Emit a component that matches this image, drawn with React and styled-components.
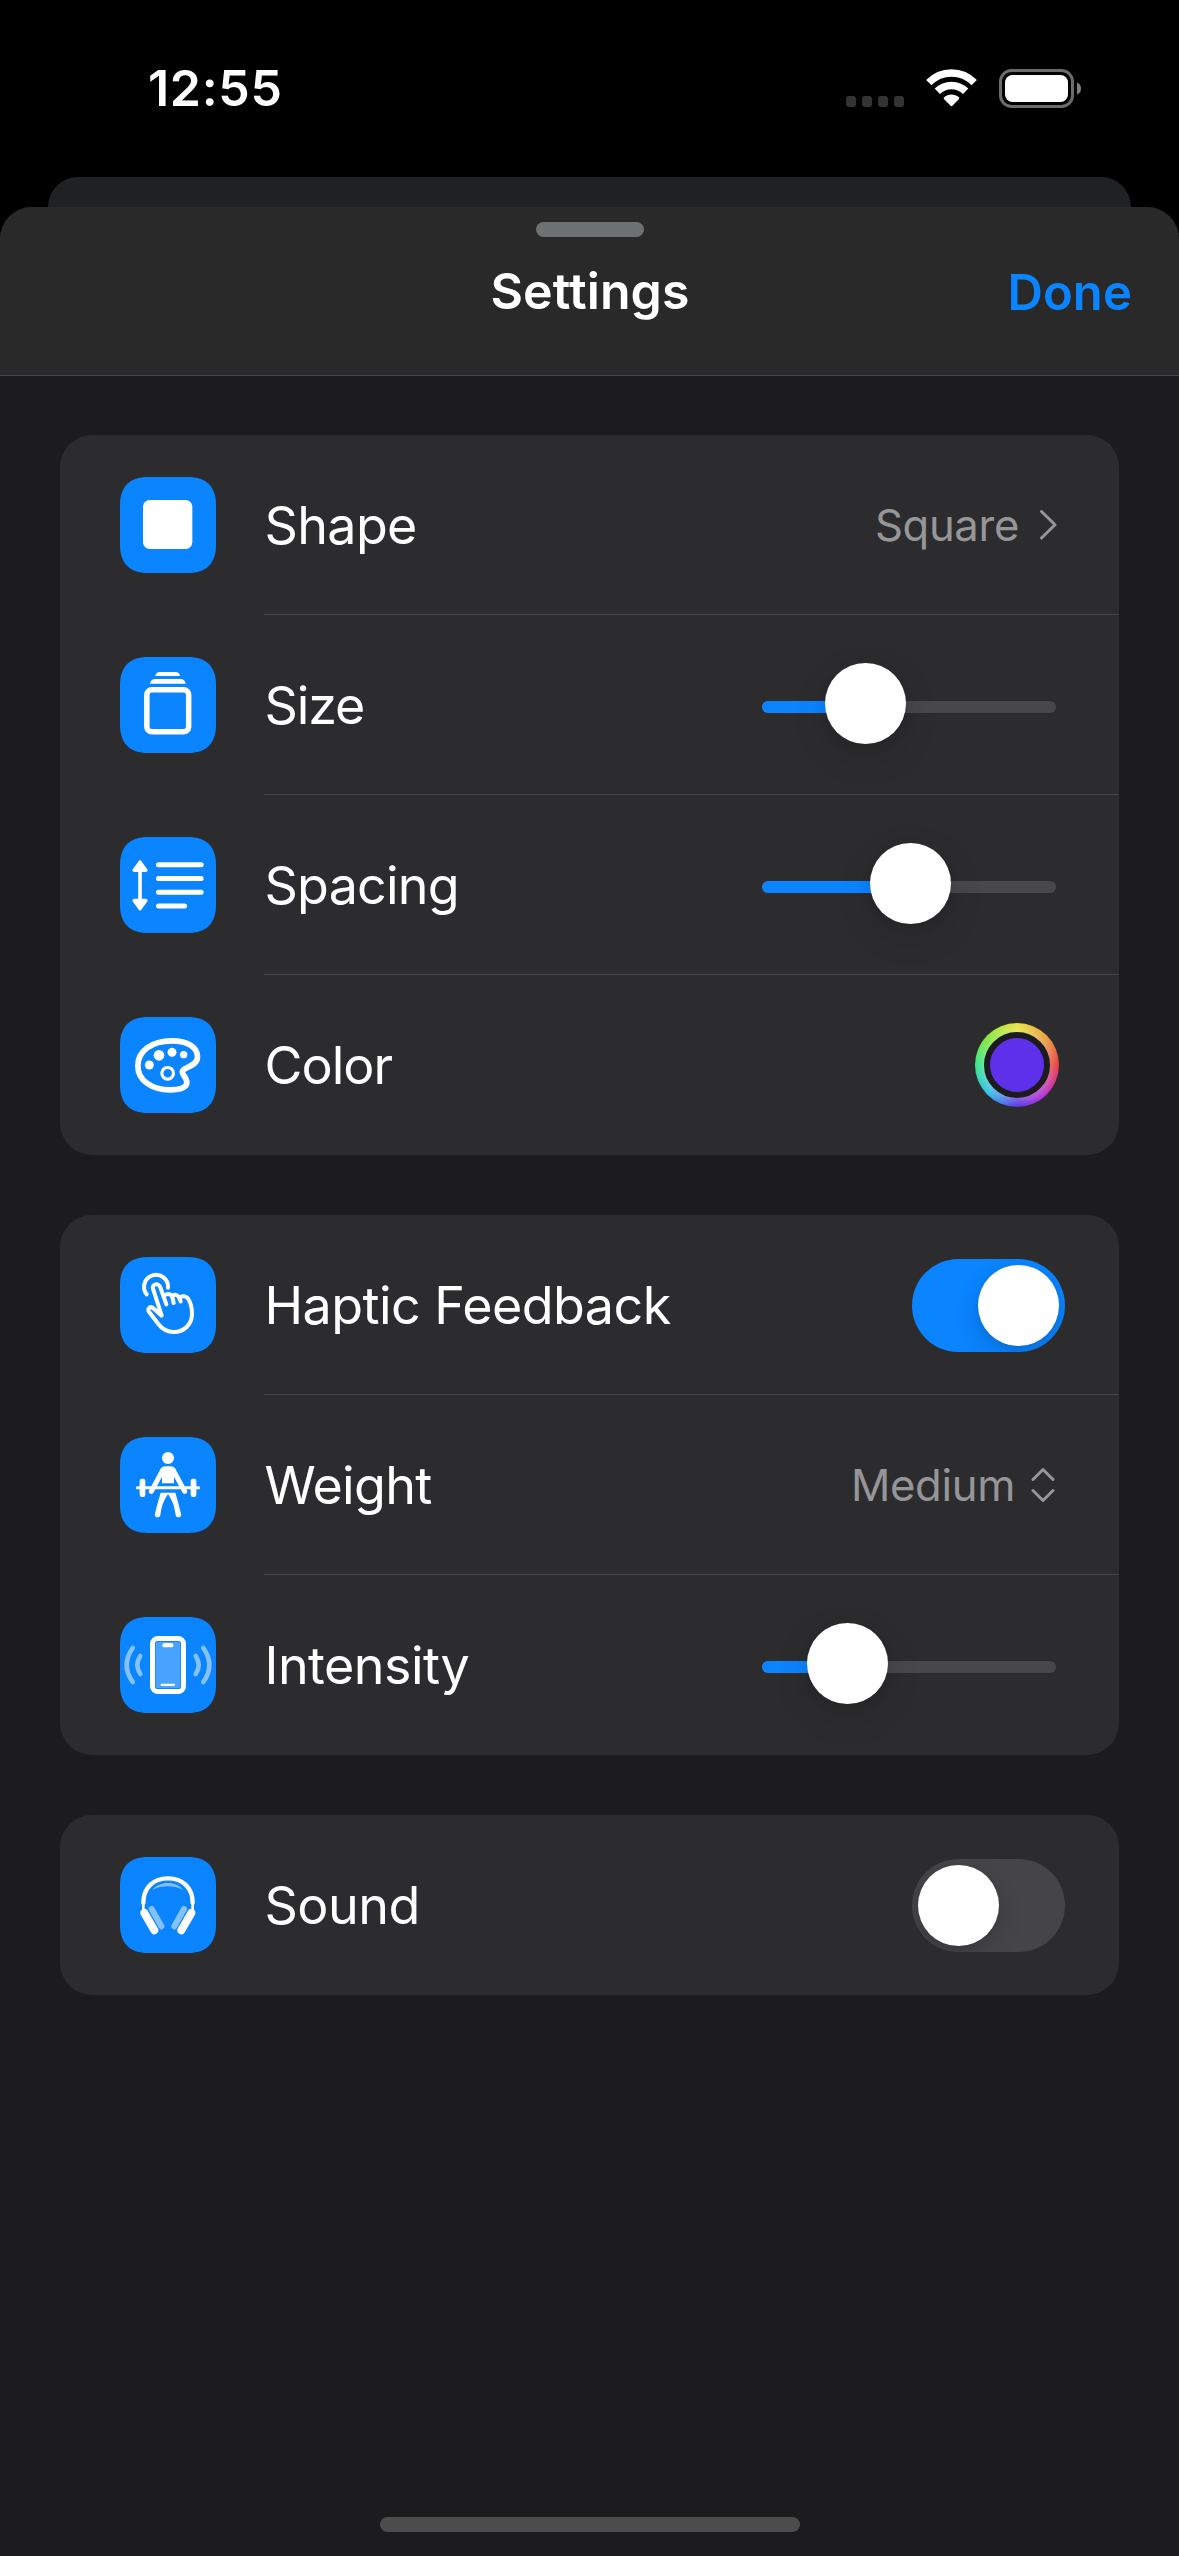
import React from 'react';
import styled, { createGlobalStyle } from 'styled-components';

const FONT = 'Inter, Roboto, "Liberation Sans", sans-serif';
const BLUE = '#0a84ff';

const GlobalStyle = createGlobalStyle`
  *, *::before, *::after { box-sizing: border-box; }
  html, body { margin: 0; padding: 0; background: #000; }
  body { font-family: ${FONT}; color: #fff; }
`;

const Screen = styled.div`
  width: 1179px;
  height: 2556px;
  display: flex;
  flex-direction: column;
  background: #000;
  overflow: hidden;
`;

const StatusBar = styled.div`
  height: 177px;
  padding: 0 98px 1px 148px;
  display: flex;
  align-items: center;
  justify-content: space-between;
`;

const Clock = styled.span`
  font-size: 50px;
  font-weight: 600;
  letter-spacing: 0.68px;
`;

const StatusIcons = styled.div`
  display: flex;
  align-items: center;
  gap: 22px;
`;

const BackSheet = styled.div`
  height: 30px;
  margin: 0 48px;
  border-radius: 30px 30px 0 0;
  background: #202122;
`;

const Sheet = styled.main`
  flex: 1;
  display: flex;
  flex-direction: column;
  align-items: stretch;
  border-radius: 32px 32px 0 0;
  background: #1c1c1e;
  overflow: hidden;
`;

const SheetHeader = styled.header`
  height: 169px;
  padding-top: 15px;
  display: flex;
  flex-direction: column;
  align-items: center;
  background: #292929;
  border-bottom: 1px solid #464647;
`;

const Grabber = styled.div`
  width: 108px;
  height: 15px;
  border-radius: 7.5px;
  background: #6e7172;
`;

const NavRow = styled.div`
  width: 100%;
  height: 108px;
  padding: 0 47px 0 48px;
  display: grid;
  grid-template-columns: 1fr auto 1fr;
  align-items: center;
`;

const Title = styled.h1`
  grid-column: 2;
  margin: 0;
  font-size: 50px;
  font-weight: 600;
  letter-spacing: 0.12px;
`;

const DoneButton = styled.button`
  justify-self: end;
  margin: 0;
  padding: 2px 0 0;
  border: 0;
  background: none;
  color: ${BLUE};
  font: 600 49px ${FONT};
  letter-spacing: 0.1px;
`;

const Groups = styled.div`
  flex: 1;
  padding: 59px 60px 0;
  display: flex;
  flex-direction: column;
  gap: 60px;
`;

const Group = styled.section`
  border-radius: 32px;
  background: #2c2c2e;
  overflow: hidden;
`;

const Row = styled.div`
  height: 180px;
  padding-left: 60px;
  display: flex;
  align-items: center;
  gap: 48px;
`;

const RowBody = styled.div`
  flex: 1;
  height: 180px;
  padding-right: ${(p) => p.$inset}px;
  display: flex;
  align-items: center;
  justify-content: space-between;

  ${Row}:not(:last-child) > & {
    background: linear-gradient(#454547, #454547) bottom / 100% 1px no-repeat;
  }
`;

const Label = styled.span`
  padding-left: 0.5px;
  font-size: 52px;
  font-weight: 400;
  letter-spacing: ${(p) => p.$tracking}px;
  white-space: nowrap;
`;

const Value = styled.div`
  display: flex;
  align-items: center;
  gap: ${(p) => p.$gap}px;
  color: #969698;
  font-size: 43.6px;
  letter-spacing: -0.32px;
`;

const SliderTrack = styled.div`
  width: 294px;
  height: 12px;
  margin-top: 4px;
  display: flex;
  align-items: center;
  border-radius: 6px;
  background: #48474c;
`;

const SliderFill = styled.div`
  flex: none;
  width: ${(p) => p.$width}px;
  height: 12px;
  border-radius: 6px 0 0 6px;
  background: ${BLUE};
`;

const SliderThumb = styled.div`
  flex: none;
  width: 81px;
  height: 81px;
  margin: -7px 0 0 -40px;
  border-radius: 50%;
  background: #fff;
  box-shadow: 0 12px 36px rgba(0, 0, 0, 0.12), 0 2px 12px rgba(0, 0, 0, 0.08);
`;

const ColorWell = styled.div`
  width: 84px;
  height: 84px;
  padding: 9px;
  border-radius: 50%;
  background:
    radial-gradient(circle closest-side, rgba(235, 235, 235, 0.3) 76%, rgba(235, 235, 235, 0) 100%),
    conic-gradient(#e8e43a, #eba03a 45deg, #ea3b3b 90deg, #b32fd8 140deg, #5b34e8 180deg, #30bdea 225deg, #34e58c 270deg, #78e83a 308deg, #e8e43a);
`;

const ColorSwatch = styled.div`
  width: 66px;
  height: 66px;
  border: 6px solid #1c1c1e;
  border-radius: 50%;
  background: #5e30eb;
`;

const Switch = styled.div`
  width: 153px;
  height: 93px;
  padding: 6px;
  margin-top: 1px;
  display: flex;
  justify-content: ${(p) => (p.$on ? 'flex-end' : 'flex-start')};
  border-radius: 46.5px;
  background: ${(p) => (p.$on ? BLUE : '#454449')};
  overflow: hidden;
`;

const SwitchThumb = styled.div`
  width: 81px;
  height: 81px;
  border-radius: 50%;
  background: #fff;
  box-shadow: 0 9px 24px rgba(0, 0, 0, 0.15), 0 3px 6px rgba(0, 0, 0, 0.06);
`;

const HomeIndicator = styled.div`
  width: 420px;
  height: 15px;
  margin: 0 0 24px 380px;
  border-radius: 7.5px;
  background: #4c4c4c;
`;

const Glyph = styled.svg`
  display: block;
  flex: none;
`;

function Tile({ children }) {
  return (
    <Glyph width="96" height="96" viewBox="0 0 288 288" fill="none" stroke="none">
      <path
        fill={BLUE}
        d="M84 0H204C259 0 288 29 288 84V204C288 259 259 288 204 288H84C29 288 0 259 0 204V84C0 29 29 0 84 0Z"
      />
      {children}
    </Glyph>
  );
}

const ShapeIcon = () => (
  <Tile>
    <rect x="69" y="69" width="148" height="147" rx="20" fill="#fff" />
  </Tile>
);

const SizeIcon = () => (
  <Tile>
    <path fill="#fff" d="M106 57C107 49 112 45 120 45H166C174 45 179 49 180 57Z" />
    <path fill="#fff" d="M90 80C91 71 97 66 106 66H181C190 66 196 71 197 80Z" />
    <rect x="80.5" y="98.5" width="125.5" height="126" rx="15" stroke="#fff" strokeWidth="16.5" />
  </Tile>
);

const SpacingIcon = () => (
  <Tile>
    <g stroke="#fff" strokeLinecap="round" strokeLinejoin="round">
      <path strokeWidth="15" d="M115.5 83H243.5M115.5 124.5H243.5M115.5 165.5H243.5M115.5 207H193.5" />
      <path strokeWidth="11" d="M60 90V200" />
      <path strokeWidth="8" fill="#fff" d="M60 73.500L78.500 99Q79 101 77 101H43Q41 101 41.500 99Z" />
      <path strokeWidth="8" fill="#fff" d="M60 216.500L78.500 191Q79 189 77 189H43Q41 189 41.500 191Z" />
    </g>
  </Tile>
);

const PaletteIcon = () => (
  <Tile>
    <path
      stroke="#fff"
      strokeWidth="17"
      strokeLinejoin="round"
      d="M155 71.500C205 71.500 232.500 92 232.500 120C232.500 138 215 145 203 151C188 158 183 163 190 173C196 182 200.500 188 200.500 196C200.500 212 180 218.500 150 218.500C95 218.500 53.500 190 53.500 147C53.500 102 95 71.500 155 71.500Z"
    />
    <g fill="#fff">
      <circle cx="88" cy="144" r="13.5" />
      <circle cx="117" cy="115" r="16" />
      <circle cx="156" cy="106" r="13.5" />
      <circle cx="191" cy="113" r="11" />
    </g>
    <circle cx="143" cy="169" r="17.5" stroke="#fff" strokeWidth="9.5" />
  </Tile>
);

const TapIcon = () => (
  <Tile>
    <g
      transform="translate(-12 -21)"
      stroke="#fff"
      strokeWidth="12"
      strokeLinecap="round"
      strokeLinejoin="round"
    >
      <path d="M92 133A36 36 0 1 1 156 113" />
      <path d="M151 163L133 112C129 98 107 101 111 116L137 197L111 174C101 167 93 177 100 187L127 222C140 239 155 246 173 246C205 246 228 222 228 192C228 175 224 158 217 147C212 138 202 137 192 142" />
      <path d="M145 137C155 129 166 132 169 141L173 159" />
      <path d="M168 137C180 131 188 137 190 145L194 154" />
    </g>
  </Tile>
);

const LifterIcon = () => (
  <Tile>
    <g fill="#fff">
      <circle cx="144" cy="63" r="18" />
      <path d="M122 97Q126 88 136 88H152Q162 88 166 97L162 112V139H126V112Z" />
      <path d="M122 167H166C170 180 177 205 183 230A8 8 0 0 1 167 235C164 212 160 196 146 174H142C128 196 124 212 121 235A8 8 0 0 1 105 230C111 205 118 180 122 167Z" />
      <rect x="59" y="125" width="17" height="55" rx="7" />
      <rect x="212" y="125" width="17" height="55" rx="7" />
    </g>
    <g stroke="#fff" strokeLinecap="round">
      <path strokeWidth="9" d="M52 152.500H236" />
      <path strokeWidth="15" d="M128.500 99L94 163M159.500 99L194 163" />
    </g>
  </Tile>
);

const PhoneWavesIcon = () => (
  <Tile>
    <rect x="107" y="75" width="74" height="138" rx="6" fill="#fff" fillOpacity="0.25" />
    <rect x="97.5" y="64.5" width="93" height="159" rx="16" stroke="#fff" strokeWidth="15" />
    <rect x="127" y="78" width="33" height="13" rx="6.5" fill="#fff" />
    <rect x="122" y="200" width="43" height="7" rx="3.5" fill="#fff" />
    <g stroke="#84c1ff" strokeWidth="14" strokeLinecap="round">
      <path d="M61 117Q43 144 61 171" />
      <path d="M38 93Q2 144 38 195" />
      <path d="M227 117Q245 144 227 171" />
      <path d="M250 93Q286 144 250 195" />
    </g>
  </Tile>
);

const HeadphonesIcon = () => (
  <Tile>
    <path
      fill="#84c1ff"
      d="M97 99C110 84 125 78 143.500 78C162 78 177 84 190 99C175 91 160 88 143.500 88C127 88 112 91 97 99Z"
    />
    <g stroke="#84c1ff" strokeWidth="18" strokeLinecap="round">
      <path d="M95 156L124 208" />
      <path d="M192 156L163 208" />
    </g>
    <g stroke="#fff" strokeLinecap="round">
      <path strokeWidth="13" d="M70 138C70 92 100 64 144 64C188 64 218 92 218 138" />
      <path strokeWidth="8" d="M70 138V162M218 138V162" />
      <path strokeWidth="24" d="M73 168L103 220M214 168L184 220" />
    </g>
  </Tile>
);

const SignalDots = () => (
  <Glyph width="58" height="38" viewBox="0 0 58 38" fill="#333">
    {[0, 16, 32, 48].map((x) => (
      <rect key={x} x={x} y="27" width="10" height="11" rx="3" />
    ))}
  </Glyph>
);

const WifiIcon = () => (
  <Glyph width="51" height="38" viewBox="0 0 51 38" fill="none">
    <g stroke="#fff" strokeWidth="7.6">
      <path d="M2.800 13.600C15.500 0.800 35.500 0.800 48.200 13.600" />
      <path d="M11.300 22.300C19.500 14.500 31.500 14.500 39.700 22.300" />
    </g>
    <path fill="#fff" d="M18.200 28.200C22.200 24.600 28.800 24.600 32.800 28.200Q33.600 29.200 32.800 30.200L26.400 36.800Q25.500 37.500 24.600 36.800L18.200 30.200Q17.400 29.200 18.200 28.200Z" />
  </Glyph>
);

const BatteryIcon = () => (
  <Glyph width="82" height="39" viewBox="0 0 82 39" fill="none">
    <rect x="1.5" y="1.5" width="72" height="36" rx="11" stroke="#6c6c6c" strokeWidth="3" />
    <rect x="6" y="6" width="63" height="27" rx="7.500" fill="#fff" />
    <path fill="#808080" d="M78 13.500Q82 15 82 19.500T78 25.500Z" />
  </Glyph>
);

const Chevron = () => (
  <Glyph width="18" height="32" viewBox="0 0 18 32" fill="none" stroke="#969698" strokeWidth="3" strokeLinecap="round" strokeLinejoin="round">
    <path d="M2.500 2.500L16 15.700L2.500 29" />
  </Glyph>
);

const UpDown = () => (
  <Glyph width="24" height="36" viewBox="0 0 24 36" fill="none" stroke="#969698" strokeWidth="3" strokeLinecap="round" strokeLinejoin="round">
    <path d="M2 12.500L12 2.500L22 12.500M2 23.500L12 33.500L22 23.500" />
  </Glyph>
);

function Slider({ position }) {
  return (
    <SliderTrack>
      <SliderFill $width={position} />
      <SliderThumb />
    </SliderTrack>
  );
}

function Toggle({ on }) {
  return (
    <Switch $on={on}>
      <SwitchThumb />
    </Switch>
  );
}

function Setting({ icon: Icon, label, tracking, inset = 63, children }) {
  return (
    <Row>
      <Icon />
      <RowBody $inset={inset}>
        <Label $tracking={tracking}>{label}</Label>
        {children}
      </RowBody>
    </Row>
  );
}

export default function App() {
  return (
    <>
      <GlobalStyle />
      <Screen>
        <StatusBar>
          <Clock>12:55</Clock>
          <StatusIcons>
            <SignalDots />
            <WifiIcon />
            <BatteryIcon />
          </StatusIcons>
        </StatusBar>
        <BackSheet />
        <Sheet>
          <SheetHeader>
            <Grabber />
            <NavRow>
              <Title>Settings</Title>
              <DoneButton>Done</DoneButton>
            </NavRow>
          </SheetHeader>
          <Groups>
            <Group>
              <Setting icon={ShapeIcon} label="Shape" tracking={-0.64} inset={62}>
                <Value $gap={20}>
                  Square
                  <Chevron />
                </Value>
              </Setting>
              <Setting icon={SizeIcon} label="Size" tracking={-1.1}>
                <Slider position={103} />
              </Setting>
              <Setting icon={SpacingIcon} label="Spacing" tracking={-0.77}>
                <Slider position={148} />
              </Setting>
              <Setting icon={PaletteIcon} label="Color" tracking={-0.98} inset={60}>
                <ColorWell>
                  <ColorSwatch />
                </ColorWell>
              </Setting>
            </Group>
            <Group>
              <Setting icon={TapIcon} label="Haptic Feedback" tracking={-0.56} inset={54}>
                <Toggle on />
              </Setting>
              <Setting icon={LifterIcon} label="Weight" tracking={-0.69} inset={64}>
                <Value $gap={16}>
                  Medium
                  <UpDown />
                </Value>
              </Setting>
              <Setting icon={PhoneWavesIcon} label="Intensity" tracking={-0.54}>
                <Slider position={85} />
              </Setting>
            </Group>
            <Group>
              <Setting icon={HeadphonesIcon} label="Sound" tracking={-0.5} inset={54}>
                <Toggle />
              </Setting>
            </Group>
          </Groups>
          <HomeIndicator />
        </Sheet>
      </Screen>
    </>
  );
}
